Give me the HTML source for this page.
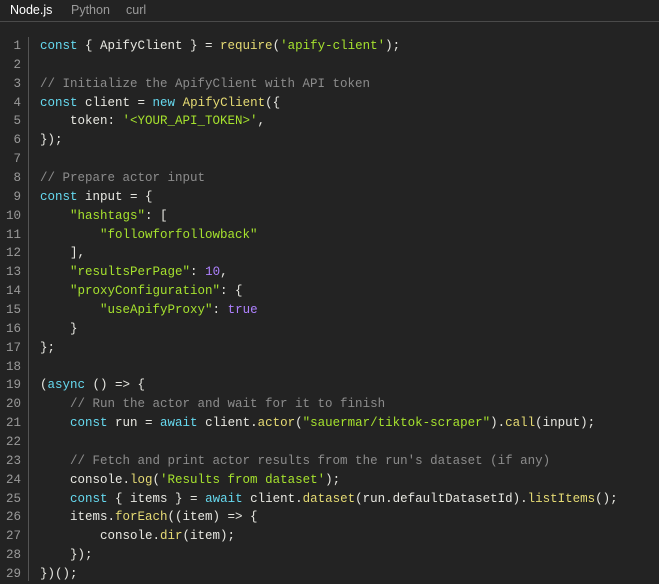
<!DOCTYPE html>
<html><head><style>
body{margin:0;width:659px;height:581px;background:#232323;overflow:hidden;font-family:"Liberation Sans",sans-serif}
.tabs{height:21px;border-bottom:1px solid #4a4a4a;font-size:12.5px;color:#9a9a9a;position:relative}
.tabs span{position:absolute;top:3px}
pre{margin:0;position:absolute;top:37px;left:0;font-family:"Liberation Mono",monospace;font-size:12.5px;line-height:18.86px;color:#e8e8e2}
.g{position:absolute;left:28px;top:37px;width:1px;height:544px;background:#555}
.ln{display:inline-block;width:21px;text-align:right;color:#9a9a9a;margin-right:19px}
.k{color:#66d9ef}.s{color:#a6e22e}.c{color:#8c8c8c}.f{color:#e6db74}.n{color:#ae81ff}
</style></head><body>
<div class="tabs"><span style="left:10px;color:#fff">Node.js</span><span style="left:71px">Python</span><span style="left:126px">curl</span></div>
<div class="g"></div>
<pre><span class="ln">1</span><span class="k">const</span> { ApifyClient } = <span class="f">require</span>(<span class="s">'apify-client'</span>);
<span class="ln">2</span>
<span class="ln">3</span><span class="c">// Initialize the ApifyClient with API token</span>
<span class="ln">4</span><span class="k">const</span> client = <span class="k">new</span> <span class="f">ApifyClient</span>({
<span class="ln">5</span>    token: <span class="s">'&lt;YOUR_API_TOKEN&gt;'</span>,
<span class="ln">6</span>});
<span class="ln">7</span>
<span class="ln">8</span><span class="c">// Prepare actor input</span>
<span class="ln">9</span><span class="k">const</span> input = {
<span class="ln">10</span>    <span class="s">"hashtags"</span>: [
<span class="ln">11</span>        <span class="s">"followforfollowback"</span>
<span class="ln">12</span>    ],
<span class="ln">13</span>    <span class="s">"resultsPerPage"</span>: <span class="n">10</span>,
<span class="ln">14</span>    <span class="s">"proxyConfiguration"</span>: {
<span class="ln">15</span>        <span class="s">"useApifyProxy"</span>: <span class="n">true</span>
<span class="ln">16</span>    }
<span class="ln">17</span>};
<span class="ln">18</span>
<span class="ln">19</span>(<span class="k">async</span> () =&gt; {
<span class="ln">20</span>    <span class="c">// Run the actor and wait for it to finish</span>
<span class="ln">21</span>    <span class="k">const</span> run = <span class="k">await</span> client.<span class="f">actor</span>(<span class="s">"sauermar/tiktok-scraper"</span>).<span class="f">call</span>(input);
<span class="ln">22</span>
<span class="ln">23</span>    <span class="c">// Fetch and print actor results from the run's dataset (if any)</span>
<span class="ln">24</span>    console.<span class="f">log</span>(<span class="s">'Results from dataset'</span>);
<span class="ln">25</span>    <span class="k">const</span> { items } = <span class="k">await</span> client.<span class="f">dataset</span>(run.defaultDatasetId).<span class="f">listItems</span>();
<span class="ln">26</span>    items.<span class="f">forEach</span>((item) =&gt; {
<span class="ln">27</span>        console.<span class="f">dir</span>(item);
<span class="ln">28</span>    });
<span class="ln">29</span>})();
</pre>
</body></html>
